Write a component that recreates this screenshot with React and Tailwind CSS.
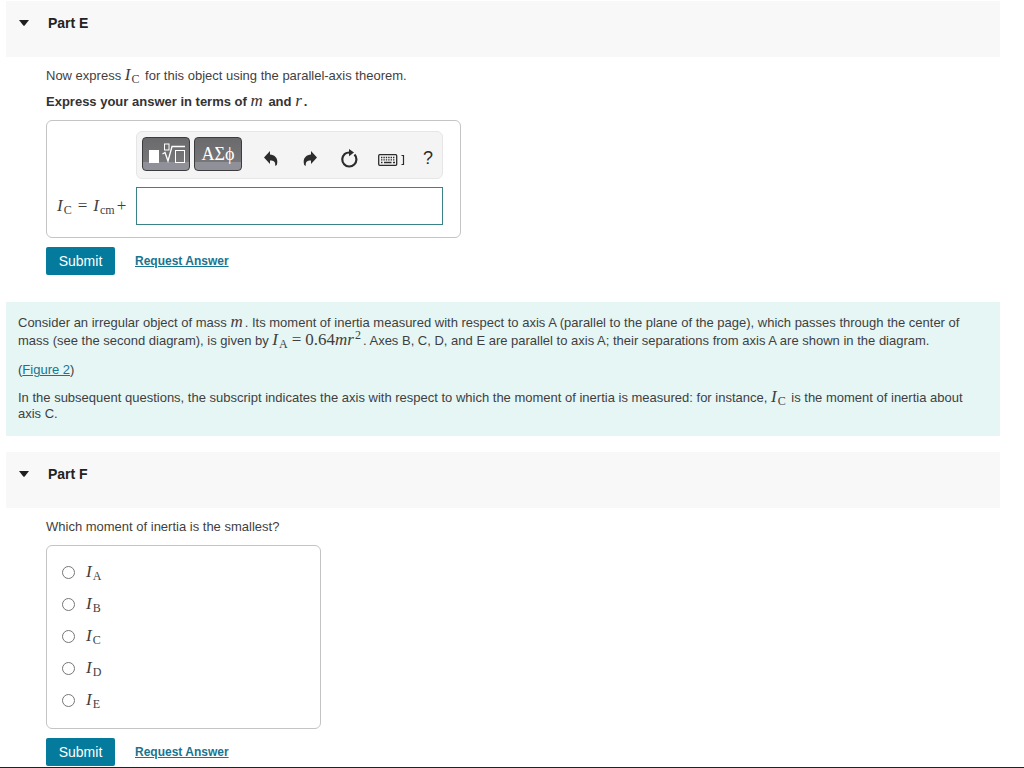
import React from "react";

function MathText({ className = "mr-0.5 text-[17px]", children }) {
  return (
    <span className={`font-['Liberation_Serif',serif] leading-[0] font-normal whitespace-nowrap ${className}`}>
      {children}
    </span>
  );
}

function Inertia({ axis }) {
  return (
    <>
      <i>I</i>
      <sub className="ml-px text-[12px]">{axis}</sub>
    </>
  );
}

function PartHeader({ title }) {
  return (
    <header className="flex h-14 items-start gap-[17px] bg-[#f8f8f8] pt-3 pl-[11px]">
      <button type="button" aria-label={`Collapse ${title}`} className="flex h-5 w-3.5 items-center justify-center">
        <svg width="10" height="6" viewBox="0 0 10 6" fill="#1f1f1f">
          <path d="M0 0 H10 L5.700 5.400 Q5 6 4.300 5.400 Z" />
        </svg>
      </button>
      <h2 className="text-sm font-bold text-[#222]">{title}</h2>
    </header>
  );
}

function Actions() {
  return (
    <div className="mt-[9px] flex items-center gap-5">
      <button type="button" className="h-7 w-[69px] rounded-xs bg-[#047a9c] text-sm text-white">
        Submit
      </button>
      <a href="#answer" className="text-xs font-bold text-[#19748f] underline">
        Request Answer
      </a>
    </div>
  );
}

function PaletteButton({ label, children }) {
  return (
    <button
      type="button"
      aria-label={label}
      className="flex h-[34px] w-12 items-center justify-center rounded border border-[#3c3c3f] bg-linear-to-b from-[#6a6a6c] from-0% via-[#77777a] via-76% to-[#909098] to-76% text-white"
    >
      {children}
    </button>
  );
}

function ToolButton({ label, width = "w-[39px]", children }) {
  return (
    <button
      type="button"
      aria-label={label}
      className={`mt-1 flex h-[34px] shrink-0 items-center justify-center text-[#2c2c2c] ${width}`}
    >
      {children}
    </button>
  );
}

const arrow = "M0 6.5 L6 0 V3.6 C11.5 4 14.6 8 12.8 14 L11.2 15 C11.6 10.5 9.8 9.3 6 9.4 V13 Z";

function Toolbar() {
  return (
    <div className="flex h-12 items-start rounded-md border border-[#e6e6e6] bg-[#f4f4f4] pt-[5px] pl-[5px]">
      <div className="mr-[9px] flex gap-1">
        <PaletteButton label="Templates">
          <svg width="38" height="24" viewBox="0 0 38 24" fill="none" stroke="#fff">
            <rect x="2" y="8" width="10" height="13" fill="#fff" stroke="none" />
            <rect x="17.500" y="2" width="4.500" height="6" />
            <path d="M15.500 12 L18 10.500 L21 19 L25 4.500 H38" strokeWidth="1.300" />
            <rect x="28.500" y="8.500" width="9" height="12" />
          </svg>
        </PaletteButton>
        <PaletteButton label="Symbols">
          <span className="font-['Liberation_Serif',serif] text-lg leading-none">ΑΣϕ</span>
        </PaletteButton>
      </div>
      <ToolButton label="Undo">
        <svg width="14" height="15" viewBox="0 0 14 15" fill="currentColor">
          <path d={arrow} />
        </svg>
      </ToolButton>
      <ToolButton label="Redo">
        <svg width="14" height="15" viewBox="0 0 14 15" fill="currentColor">
          <path d={arrow} transform="matrix(-1 0 0 1 14 0)" />
        </svg>
      </ToolButton>
      <ToolButton label="Reset">
        <svg width="18" height="19" viewBox="0 0 18 19" fill="none">
          <path d="M14.500 5.500 A7.100 7.100 0 1 1 4.500 5.200 Q6.500 3.500 9.500 3.500" stroke="currentColor" strokeWidth="2.200" />
          <path d="M9 0 L14 3.600 L9 7.200 Z" fill="currentColor" />
        </svg>
      </ToolButton>
      <ToolButton label="Keyboard shortcuts" width="w-12">
        <svg width="28" height="14" viewBox="0 0 28 14" fill="none" stroke="currentColor" className="mt-1">
          <rect x="0.700" y="1.700" width="18" height="10.600" rx="1" strokeWidth="1.300" />
          <path d="M3 4.500 H17 M3 6.800 H17" strokeWidth="1.300" strokeDasharray="1.400 1" />
          <path d="M3 9.500 H4.500 M6 9.500 H13.500 M15 9.500 H17" strokeWidth="1.300" />
          <path d="M23.500 2.500 H25.500 V11.500 H23.500" strokeWidth="1.200" />
        </svg>
      </ToolButton>
      <ToolButton label="Help" width="w-6">
        <span className="text-lg leading-none">?</span>
      </ToolButton>
    </div>
  );
}

export default function App() {
  return (
    <div className="bg-white font-['Liberation_Sans',Arial,sans-serif] text-[13px] leading-4 text-[#3f3f3f]">
      <main className="pt-px pr-6 pl-1.5">
        <PartHeader title="Part E" />
        <section className="pt-[11px] pl-10">
          <p>
            Now express{" "}
            <MathText>
              <Inertia axis="C" />
            </MathText>{" "}
            for this object using the parallel-axis theorem.
          </p>
          <p className="mt-2.5 font-bold text-[#333]">
            Express your answer in terms of{" "}
            <MathText>
              <i>m</i>
            </MathText>{" "}
            and{" "}
            <MathText>
              <i>r</i>
            </MathText>
            .
          </p>
          <div className="mt-2.5 grid max-w-[415px] grid-cols-[79px_minmax(0,1fr)] gap-y-2 rounded-md border border-[#c4c4c4] pt-2.5 pr-[17px] pb-3 pl-2.5">
            <div className="col-start-2">
              <Toolbar />
            </div>
            <label htmlFor="inertia" className="flex items-center">
              <MathText className="text-[17px]">
                <Inertia axis="C" />
                <span className="mx-1.5">=</span>
                <Inertia axis="cm" />
                <span className="ml-0.5">+</span>
              </MathText>
            </label>
            <input
              id="inertia"
              type="text"
              className="h-[38px] w-full min-w-0 border border-[#3a8287] bg-white px-2 text-base outline-none"
            />
          </div>
          <Actions />
        </section>

        <section className="mt-[27px] flex flex-col gap-3 bg-[#e5f6f5] pt-3 pr-6 pb-3.5 pl-3">
          <p className="leading-[18px]">
            Consider an irregular object of mass{" "}
            <MathText>
              <i>m</i>
            </MathText>
            . Its moment of inertia measured with respect to axis A (parallel to the plane of the page), which passes
            through the center of mass (see the second diagram), is given by{" "}
            <MathText>
              <Inertia axis="A" />
              <span className="mx-1">=</span>0.64<i>mr</i>
              <sup className="ml-px text-[12px]">2</sup>
            </MathText>
            . Axes B, C, D, and E are parallel to axis A; their separations from axis A are shown in the diagram.
          </p>
          <p>
            (
            <a href="#figure-2" className="text-[#19748f] underline">
              Figure 2
            </a>
            )
          </p>
          <p>
            In the subsequent questions, the subscript indicates the axis with respect to which the moment of inertia is
            measured: for instance,{" "}
            <MathText>
              <Inertia axis="C" />
            </MathText>{" "}
            is the moment of inertia about axis C.
          </p>
        </section>

        <div className="mt-4">
          <PartHeader title="Part F" />
        </div>
        <section className="pt-[11px] pl-10">
          <p>Which moment of inertia is the smallest?</p>
          <div
            role="radiogroup"
            aria-label="Smallest moment of inertia"
            className="mt-2.5 max-w-[275px] rounded-md border border-[#c4c4c4] pt-2.5 pb-3 pl-[15px]"
          >
            {["A", "B", "C", "D", "E"].map((axis) => (
              <label key={axis} className="flex h-8 items-center gap-[11px]">
                <input type="radio" name="smallest" className="size-[13px]" />
                <MathText className="text-[17px]">
                  <Inertia axis={axis} />
                </MathText>
              </label>
            ))}
          </div>
          <Actions />
        </section>
      </main>
      <footer className="mt-px h-px bg-[#222]" />
    </div>
  );
}
